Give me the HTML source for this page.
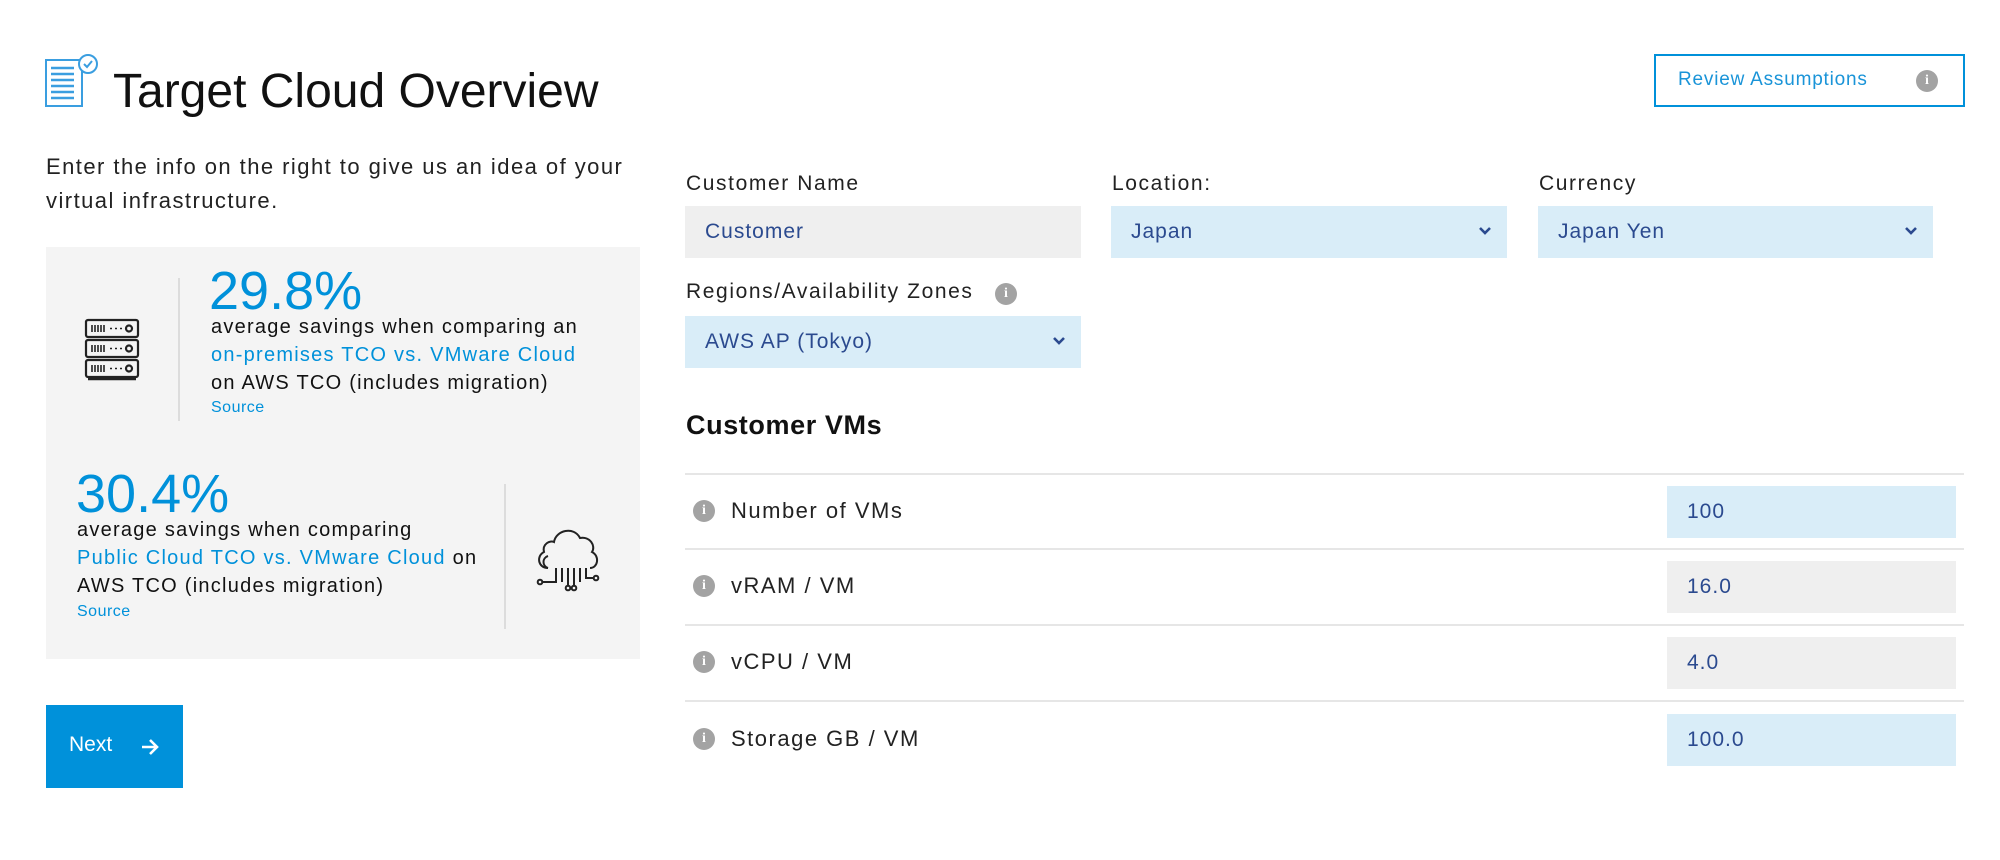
<!DOCTYPE html>
<html><head><meta charset="utf-8"><style>
*{margin:0;padding:0;box-sizing:border-box}
body{width:2000px;height:860px;background:#fff;font-family:"Liberation Sans",sans-serif;color:#1a1a1a;position:relative;overflow:hidden}
.a{position:absolute;white-space:nowrap}
.blue{color:#0091da}
.inp{position:absolute;height:52px;font-size:21px;color:#2b4a8f;padding-left:20px;line-height:52px;letter-spacing:1px}
.g{background:#efefef}.b{background:#d9edf8}
.chev{position:absolute;right:14px;top:17px}
.info{position:absolute;width:22px;height:22px;border-radius:50%;background:#a3a3a3;color:#fff;font:bold 14px/22px "Liberation Serif",serif;text-align:center;letter-spacing:0}
.line{position:absolute;left:685px;width:1279px;height:2px;background:#e6e6e6}
.lbl{position:absolute;font-size:21px;color:#222;letter-spacing:1.6px}
.row{position:absolute;left:731px;font-size:22px;color:#222;letter-spacing:1.5px}
.st{font-size:20px;line-height:28px;color:#111;letter-spacing:1.25px}
</style></head><body>

<svg class="a" style="left:44px;top:54px" width="56" height="54" viewBox="0 0 56 54">
<rect x="2" y="6" width="36" height="46" fill="#fff" stroke="#3a9ee0" stroke-width="2"/>
<g stroke="#3a9ee0" stroke-width="2.5"><line x1="7" y1="14" x2="30" y2="14"/><line x1="7" y1="20" x2="30" y2="20"/><line x1="7" y1="26" x2="30" y2="26"/><line x1="7" y1="32" x2="30" y2="32"/><line x1="7" y1="38" x2="30" y2="38"/><line x1="7" y1="44" x2="30" y2="44"/></g>
<circle cx="44" cy="10" r="9" fill="#fff" stroke="#3a9ee0" stroke-width="2"/>
<path d="M40 10 l3 3 l5 -6" fill="none" stroke="#3a9ee0" stroke-width="2"/>
</svg>
<div class="a" style="left:113px;top:64px;font-size:48px;color:#111">Target Cloud Overview</div>

<div class="a" style="left:46px;top:150px;font-size:22px;line-height:34px;color:#222;letter-spacing:1.45px">Enter the info on the right to give us an idea of your<br>virtual infrastructure.</div>

<div class="a" style="left:46px;top:247px;width:594px;height:412px;background:#f4f4f4"></div>
<div class="a" style="left:178px;top:278px;width:2px;height:143px;background:#dcdcdc"></div>
<svg class="a" style="left:84px;top:318px" width="58" height="64" viewBox="0 0 58 64">
<g fill="none" stroke="#222" stroke-width="2.2">
<rect x="2" y="2" width="52" height="17" rx="2"/><rect x="2" y="22" width="52" height="17" rx="2"/><rect x="2" y="42" width="52" height="17" rx="2"/>
<circle cx="45" cy="10.5" r="3"/><circle cx="45" cy="30.5" r="3"/><circle cx="45" cy="50.5" r="3"/>
</g>
<g stroke="#222" stroke-width="1.6"><path d="M8 7v7M11 7v7M14 7v7M17 7v7M20 7v7M8 27v7M11 27v7M14 27v7M17 27v7M20 27v7M8 47v7M11 47v7M14 47v7M17 47v7M20 47v7"/>
<path d="M26 10.5h2M31 10.5h2M36 10.5h2M26 30.5h2M31 30.5h2M36 30.5h2M26 50.5h2M31 50.5h2M36 50.5h2"/></g>
<path d="M4 61h48" stroke="#222" stroke-width="2.5"/>
</svg>
<div class="a blue" style="left:209px;top:263px;font-size:54px;line-height:56px">29.8%</div>
<div class="a st" style="left:211px;top:313px">average savings when comparing an<br><span class="blue">on-premises TCO vs. VMware Cloud</span><br>on AWS TCO (includes migration)</div>
<div class="a blue" style="left:211px;top:399px;font-size:16px;letter-spacing:0.5px">Source</div>

<div class="a blue" style="left:76px;top:466px;font-size:54px;line-height:56px">30.4%</div>
<div class="a st" style="left:77px;top:516px">average savings when comparing<br><span class="blue">Public Cloud TCO vs. VMware Cloud</span> on<br>AWS TCO (includes migration)</div>
<div class="a blue" style="left:77px;top:603px;font-size:16px;letter-spacing:0.5px">Source</div>
<div class="a" style="left:504px;top:484px;width:2px;height:145px;background:#dcdcdc"></div>
<svg class="a" style="left:534px;top:520px" width="72" height="72" viewBox="0 0 72 72">
<g fill="none" stroke="#222" stroke-width="2">
<path d="M14 48 C4 48 2 36 10 32 C8 24 16 20 20 22 C22 10 40 6 46 18 C56 16 62 26 58 32 C66 36 64 48 56 48"/>
<path d="M14 48 C8 46 8 38 14 36"/>
<path d="M8 62h14v-14M28 48v14M34 48v18M40 48v18M46 48v14M52 48v10h8"/>
<circle cx="6" cy="62" r="2.3"/><circle cx="34" cy="68" r="2.3"/><circle cx="40" cy="68" r="2.3"/><circle cx="62" cy="58" r="2.3"/>
</g>
</svg>

<div class="a" style="left:46px;top:705px;width:137px;height:83px;background:#0091da"></div>
<div class="a" style="left:69px;top:733px;font-size:21px;color:#fff">Next</div>
<svg class="a" style="left:140px;top:737px" width="20" height="20" viewBox="0 0 20 20"><path d="M2 10h15M10 3l7 7-7 7" fill="none" stroke="#fff" stroke-width="2.6"/></svg>

<div class="a" style="left:1654px;top:54px;width:311px;height:53px;border:2px solid #0091da"></div>
<div class="a blue" style="left:1678px;top:69px;font-size:19px;color:#1a94d8;letter-spacing:0.8px">Review Assumptions</div>
<div class="info" style="left:1916px;top:70px">i</div>

<div class="lbl" style="left:686px;top:172px">Customer Name</div>
<div class="lbl" style="left:1112px;top:172px">Location:</div>
<div class="lbl" style="left:1539px;top:172px">Currency</div>
<div class="inp g" style="left:685px;top:206px;width:396px">Customer</div>
<div class="inp b" style="left:1111px;top:206px;width:396px">Japan<svg class="chev" width="16" height="16" viewBox="0 0 16 16"><path d="M3 5l5 5 5-5" fill="none" stroke="#2b4a8f" stroke-width="2.6"/></svg></div>
<div class="inp b" style="left:1538px;top:206px;width:395px">Japan Yen<svg class="chev" width="16" height="16" viewBox="0 0 16 16"><path d="M3 5l5 5 5-5" fill="none" stroke="#2b4a8f" stroke-width="2.6"/></svg></div>

<div class="lbl" style="left:686px;top:280px">Regions/Availability Zones</div>
<div class="info" style="left:995px;top:283px">i</div>
<div class="inp b" style="left:685px;top:316px;width:396px">AWS AP (Tokyo)<svg class="chev" width="16" height="16" viewBox="0 0 16 16"><path d="M3 5l5 5 5-5" fill="none" stroke="#2b4a8f" stroke-width="2.6"/></svg></div>

<div class="a" style="left:686px;top:410px;font-size:27px;font-weight:bold;color:#111;letter-spacing:0.6px">Customer VMs</div>

<div class="line" style="top:473px"></div>
<div class="line" style="top:548px"></div>
<div class="line" style="top:624px"></div>
<div class="line" style="top:700px"></div>

<div class="info" style="left:693px;top:500px">i</div><div class="row" style="top:498px">Number of VMs</div>
<div class="info" style="left:693px;top:575px">i</div><div class="row" style="top:573px">vRAM / VM</div>
<div class="info" style="left:693px;top:651px">i</div><div class="row" style="top:649px">vCPU / VM</div>
<div class="info" style="left:693px;top:728px">i</div><div class="row" style="top:726px">Storage GB / VM</div>

<div class="inp b" style="left:1667px;top:486px;width:289px">100</div>
<div class="inp g" style="left:1667px;top:561px;width:289px">16.0</div>
<div class="inp g" style="left:1667px;top:637px;width:289px">4.0</div>
<div class="inp b" style="left:1667px;top:714px;width:289px">100.0</div>
</body></html>
